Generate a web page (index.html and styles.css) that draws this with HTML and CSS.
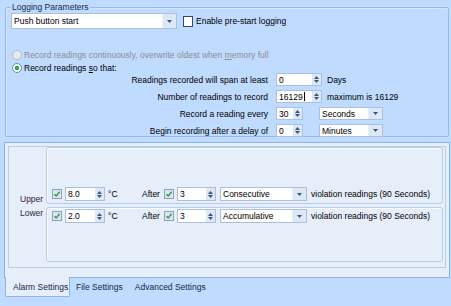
FILE: index.html
```html
<!DOCTYPE html>
<html>
<head>
<meta charset="utf-8">
<link rel="stylesheet" href="styles.css">
</head>
<body>
<div class="app">
  <div class="group">
    <div class="legend">Logging Parameters</div>
    <div class="start-row">
      <div class="combo combo-start"><span class="val">Push button start</span><span class="btn"><svg width="5" height="3" viewBox="0 0 5 3"><path d="M0 0H5L2.5 3Z" fill="#3b5479"/></svg></span></div>
      <span class="cb cb-plain"></span>
      <span class="cb-label">Enable pre-start lo<u>g</u>ging</span>
    </div>
    <div class="radio-row disabled"><svg class="radio" width="10" height="10" viewBox="0 0 10 10"><circle cx="5" cy="5" r="4.5" fill="#e6e9ee" stroke="#b7bcc4"/></svg><span>Record readings continuously, overwrite oldest when <u>m</u>emory full</span></div>
    <div class="radio-row"><svg class="radio" width="10" height="10" viewBox="0 0 10 10"><circle cx="5" cy="5" r="4.5" fill="#fff" stroke="#6a87ad"/><circle cx="5" cy="5" r="2.3" fill="#27b42c"/></svg><span>Record readings <u>s</u>o that:</span></div>
    <div class="rows">
      <span class="lbl">Readings recorded will span at least</span>
      <div class="ctl"><div class="spin w46"><span class="val">0</span><span class="arrows"><svg width="5" height="3" viewBox="0 0 5 3"><path d="M0 3H5L2.5 0Z" fill="#3b5479"/></svg><svg width="5" height="3" viewBox="0 0 5 3"><path d="M0 0H5L2.5 3Z" fill="#3b5479"/></svg></span></div><span class="unit">Days</span></div>
      <span class="lbl">Number of readings to record</span>
      <div class="ctl"><div class="spin w46"><span class="val">16129<i class="caret"></i></span><span class="arrows"><svg width="5" height="3" viewBox="0 0 5 3"><path d="M0 3H5L2.5 0Z" fill="#3b5479"/></svg><svg width="5" height="3" viewBox="0 0 5 3"><path d="M0 0H5L2.5 3Z" fill="#3b5479"/></svg></span></div><span class="unit">maximum is 16129</span></div>
      <span class="lbl">Record a reading every</span>
      <div class="ctl"><div class="spin w27"><span class="val">30</span><span class="arrows"><svg width="5" height="3" viewBox="0 0 5 3"><path d="M0 3H5L2.5 0Z" fill="#3b5479"/></svg><svg width="5" height="3" viewBox="0 0 5 3"><path d="M0 0H5L2.5 3Z" fill="#3b5479"/></svg></span></div><div class="combo combo-unit"><span class="val">Seconds</span><span class="btn"><svg width="5" height="3" viewBox="0 0 5 3"><path d="M0 0H5L2.5 3Z" fill="#3b5479"/></svg></span></div></div>
      <span class="lbl">Begin recording after a delay of</span>
      <div class="ctl"><div class="spin w27"><span class="val">0</span><span class="arrows"><svg width="5" height="3" viewBox="0 0 5 3"><path d="M0 3H5L2.5 0Z" fill="#3b5479"/></svg><svg width="5" height="3" viewBox="0 0 5 3"><path d="M0 0H5L2.5 3Z" fill="#3b5479"/></svg></span></div><div class="combo combo-unit"><span class="val">Minutes</span><span class="btn"><svg width="5" height="3" viewBox="0 0 5 3"><path d="M0 0H5L2.5 3Z" fill="#3b5479"/></svg></span></div></div>
    </div>
  </div>

  <div class="tabctl">
    <div class="page">
      <div class="alarm alarm-upper">
        <span class="side">Upper</span>
        <div class="agroup">
          <div class="arow">
            <span class="cb cb-check"><svg width="8" height="8" viewBox="0 0 8 8"><path d="M1.5 4.2L3.2 6 6.6 1.8" fill="none" stroke="#2fa336" stroke-width="1.4"/></svg></span>
            <div class="spin w40"><span class="val">8.0</span><span class="arrows"><svg width="5" height="3" viewBox="0 0 5 3"><path d="M0 3H5L2.5 0Z" fill="#3b5479"/></svg><svg width="5" height="3" viewBox="0 0 5 3"><path d="M0 0H5L2.5 3Z" fill="#3b5479"/></svg></span></div>
            <span class="deg">°C</span>
            <span class="after">After</span>
            <span class="cb cb-check"><svg width="8" height="8" viewBox="0 0 8 8"><path d="M1.5 4.2L3.2 6 6.6 1.8" fill="none" stroke="#2fa336" stroke-width="1.4"/></svg></span>
            <div class="spin w39"><span class="val">3</span><span class="arrows"><svg width="5" height="3" viewBox="0 0 5 3"><path d="M0 3H5L2.5 0Z" fill="#3b5479"/></svg><svg width="5" height="3" viewBox="0 0 5 3"><path d="M0 0H5L2.5 3Z" fill="#3b5479"/></svg></span></div>
            <div class="combo combo-mode"><span class="val">Consecutive</span><span class="btn"><svg width="5" height="3" viewBox="0 0 5 3"><path d="M0 0H5L2.5 3Z" fill="#3b5479"/></svg></span></div>
            <span class="viol">violation readings (90 Seconds)</span>
          </div>
        </div>
      </div>
      <div class="alarm alarm-lower">
        <span class="side">Lower</span>
        <div class="agroup">
          <div class="arow">
            <span class="cb cb-check"><svg width="8" height="8" viewBox="0 0 8 8"><path d="M1.5 4.2L3.2 6 6.6 1.8" fill="none" stroke="#2fa336" stroke-width="1.4"/></svg></span>
            <div class="spin w40"><span class="val">2.0</span><span class="arrows"><svg width="5" height="3" viewBox="0 0 5 3"><path d="M0 3H5L2.5 0Z" fill="#3b5479"/></svg><svg width="5" height="3" viewBox="0 0 5 3"><path d="M0 0H5L2.5 3Z" fill="#3b5479"/></svg></span></div>
            <span class="deg">°C</span>
            <span class="after">After</span>
            <span class="cb cb-check"><svg width="8" height="8" viewBox="0 0 8 8"><path d="M1.5 4.2L3.2 6 6.6 1.8" fill="none" stroke="#2fa336" stroke-width="1.4"/></svg></span>
            <div class="spin w39"><span class="val">3</span><span class="arrows"><svg width="5" height="3" viewBox="0 0 5 3"><path d="M0 3H5L2.5 0Z" fill="#3b5479"/></svg><svg width="5" height="3" viewBox="0 0 5 3"><path d="M0 0H5L2.5 3Z" fill="#3b5479"/></svg></span></div>
            <div class="combo combo-mode"><span class="val">Accumulative</span><span class="btn"><svg width="5" height="3" viewBox="0 0 5 3"><path d="M0 0H5L2.5 3Z" fill="#3b5479"/></svg></span></div>
            <span class="viol">violation readings (90 Seconds)</span>
          </div>
        </div>
      </div>
    </div>
  </div>
  <div class="tabstrip">
    <span class="tab active">Alarm Settings</span>
    <span class="tab">File Settings</span>
    <span class="tab">Advanced Settings</span>
  </div>
</div>
</body>
</html>
```
FILE: styles.css
```css
html, body {
  margin: 0;
  padding: 0;
  background: #bfdbff;
}
.app {
  width: 451px;
  height: 306px;
  overflow: hidden;
  font-family: "Liberation Sans", Arial, sans-serif;
  font-size: 8.5px;
  color: #000;
  background: #bfdbff;
}
u { text-decoration: underline; }

.group {
  margin: 7px 2px 0 5px;
  height: 130px;
  box-sizing: border-box;
  border: 1px solid #98b9e3;
  border-radius: 2px;
  box-shadow: inset 1px 1px 0 #d6e7fd;
  padding: 0 5px;
}
.legend {
  width: max-content;
  margin: -6px 0 0 0;
  padding: 0 1px;
  height: 11px;
  line-height: 11px;
  background: #bfdbff;
  color: #15284b;
}
.start-row {
  display: flex;
  align-items: center;
  height: 16px;
}
.combo {
  display: flex;
  box-sizing: border-box;
  border: 1px solid #a9c0de;
  background: #fff;
  align-items: stretch;
}
.combo .val {
  flex: 1;
  padding-left: 2px;
  display: flex;
  align-items: center;
  white-space: nowrap;
}
.combo .btn {
  width: 13px;
  background: #dde8f6;
  border-left: 1px solid #eaf1fa;
  display: flex;
  align-items: center;
  justify-content: center;
}
.combo-start { width: 166px; height: 16px; }
.combo-unit { width: 64px; height: 13px; margin-left: 16px; }
.combo-mode { width: 87px; height: 14px; margin-left: 4px; }

.cb {
  display: inline-flex;
  align-items: center;
  justify-content: center;
  box-sizing: border-box;
  width: 10px;
  height: 10px;
}
.cb-plain {
  margin-left: 6px;
  border: 1px solid #2f4a6e;
  background: #fff;
  width: 10px;
  height: 11px;
}
.cb-label { margin-left: 3px; }
.cb-check {
  border: 1px solid #8aa3c6;
  background: #d9e4f2;
}

.radio-row {
  display: flex;
  align-items: center;
  height: 13px;
  padding-left: 1px;
}
.start-row + .radio-row { margin-top: 19px; }
.radio { margin-right: 2px; flex: none; }
.disabled { color: #8e8e8e; }

.rows {
  display: grid;
  grid-template-columns: 257px auto;
  grid-auto-rows: 17px;
  column-gap: 8px;
  margin-top: -3px;
  align-items: center;
}
.lbl { text-align: right; white-space: nowrap; }
.ctl { display: flex; align-items: center; }
.unit { margin-left: 5px; }

.spin {
  display: flex;
  box-sizing: border-box;
  height: 13px;
  border: 1px solid #a9c0de;
  background: #fff;
}
.spin .val {
  flex: 1;
  padding-left: 2px;
  display: flex;
  align-items: center;
}
.spin .arrows {
  width: 9px;
  background: #dde8f6;
  display: flex;
  flex-direction: column;
  align-items: center;
  justify-content: center;
  gap: 1px;
}
.caret {
  display: inline-block;
  width: 1px;
  height: 9px;
  background: #000;
  margin-left: 1px;
}
.w46 { width: 46px; }
.w27 { width: 27px; }
.w40 { width: 40px; }
.w39 { width: 39px; }

.tabctl {
  margin: 5px 1px 0 4px;
  height: 136px;
  box-sizing: border-box;
  border: 1px solid #8db2e3;
  background: #e6eef9;
  padding: 3px 3px 9px 3px;
}
.page {
  height: 100%;
  box-sizing: border-box;
  border: 1px solid #b9cde9;
  display: flex;
  flex-direction: column;
  gap: 3px;
}
.alarm {
  display: flex;
}
.side {
  width: 37px;
  box-sizing: border-box;
  padding-left: 11px;
  color: #2b1f3d;
}
.alarm-upper .side { align-self: flex-end; padding-bottom: 0; }
.alarm-lower .side { align-self: flex-start; padding-top: 1px; }
.agroup {
  flex: 1;
  margin-right: 2px;
  box-sizing: border-box;
  border: 1px solid #b9cde9;
  border-radius: 3px;
  box-shadow: inset 1px 1px 0 #f7faff;
  padding: 0 5px;
  display: flex;
}
.alarm-upper .agroup { height: 57px; align-items: flex-end; padding-bottom: 2px; }
.alarm-lower .agroup { height: 55px; align-items: flex-start; padding-top: 1px; }
.arow {
  display: flex;
  align-items: center;
  height: 14px;
}
.arow .cb-check { margin-right: 3px; }
.deg { width: 37px; padding-left: 3px; box-sizing: border-box; }
.after { width: 22px; }
.arow .w39 { height: 14px; }
.arow .w40 { height: 14px; }
.viol { margin-left: 4px; white-space: nowrap; }

.tabstrip {
  display: flex;
  padding-left: 5px;
  height: 20px;
  margin-top: -1px;
}
.tab {
  display: flex;
  align-items: center;
  padding: 0 6px;
  color: #15284b;
}
.tab.active {
  width: 65px;
  box-sizing: border-box;
  padding: 0 0 0 7px;
  background: #e6eef9;
  border: 1px solid #8db2e3;
  border-top: none;
  border-radius: 0 0 2px 2px;
}
.tab:last-child { padding-left: 6px; }
```
